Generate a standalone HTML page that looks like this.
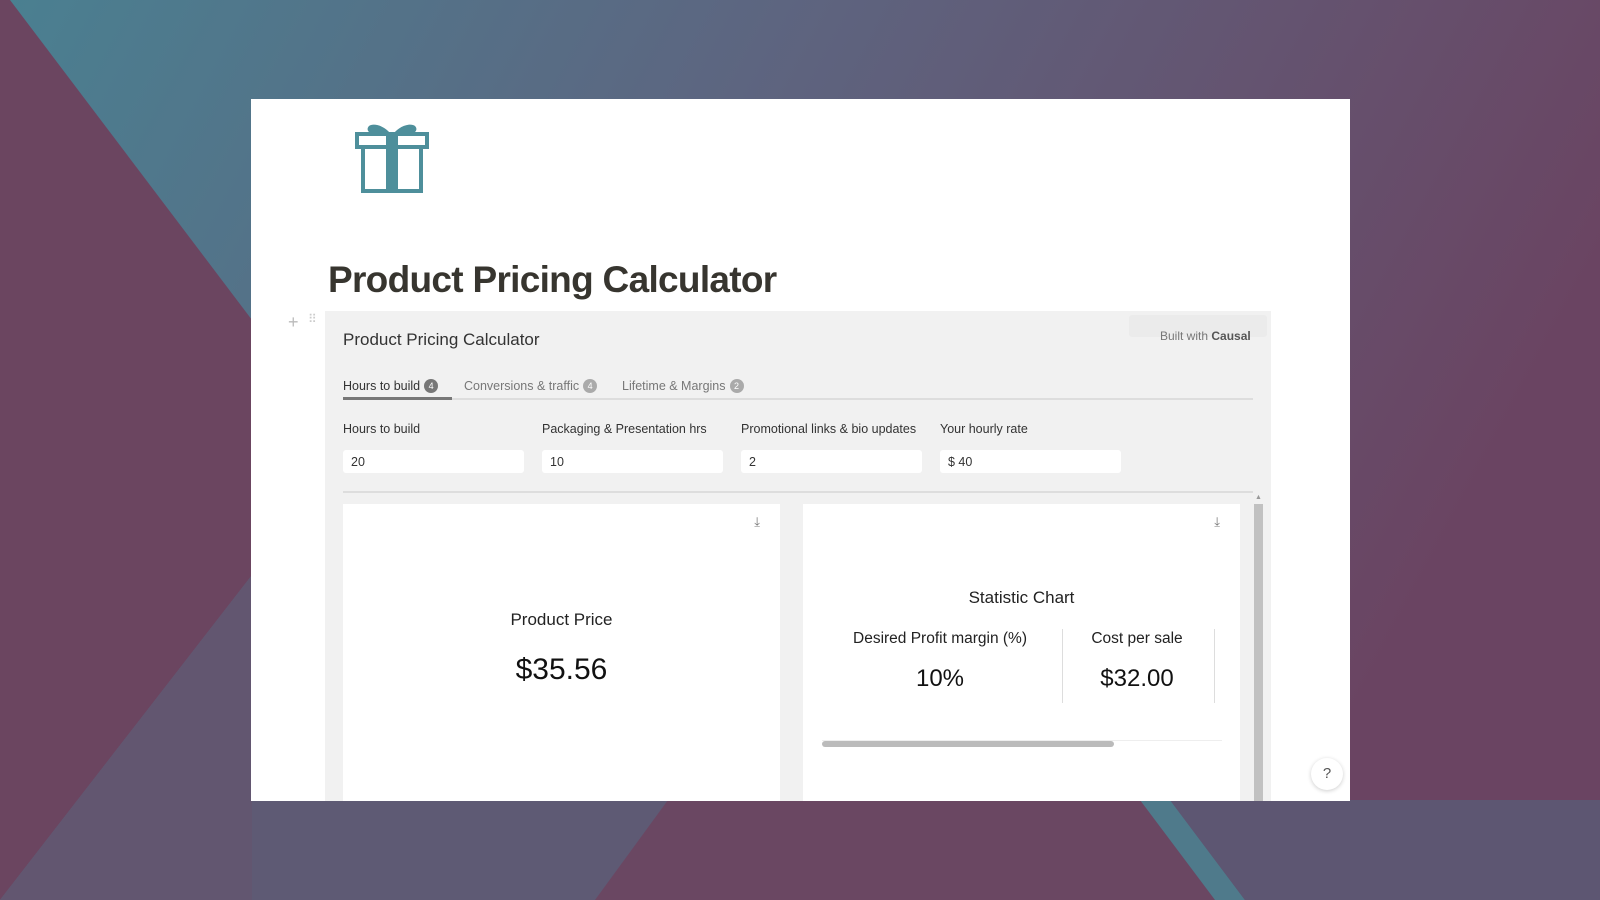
<!DOCTYPE html>
<html><head><meta charset="utf-8"><style>
*{margin:0;padding:0;box-sizing:border-box}
body{width:1600px;height:900px;position:relative;overflow:hidden;font-family:"Liberation Sans",sans-serif;color:#37352f}
.a{position:absolute;white-space:nowrap}
.lbl{font-size:12.5px;color:#333;top:421px}
.inp{top:451px;height:23px;width:181px;background:#fff;border-radius:3px;font-size:12.5px;color:#333;padding:5px 8px}
.tab{top:378px;font-size:12.5px;color:#777}
.bd{display:inline-block;width:14px;height:14px;border-radius:7px;background:#aaa;color:#fff;font-size:9px;text-align:center;line-height:14px;margin-left:4px;vertical-align:1px}
</style></head><body>
<svg class="a" style="left:0;top:0" width="1600" height="900">
<defs><linearGradient id="g" x1="0" y1="0" x2="1" y2="0.3"><stop offset="0" stop-color="#4a8091"/><stop offset="0.45" stop-color="#5d6580"/><stop offset="1" stop-color="#6a4462"/></linearGradient>
<linearGradient id="g3" x1="0" y1="0" x2="1" y2="0"><stop offset="0" stop-color="#5e5a74"/><stop offset="1" stop-color="#6a4762"/></linearGradient></defs>
<rect width="1600" height="900" fill="url(#g)"/>
<polygon points="0,0 10,0 252,320 252,575 0,900" fill="#6b4560"/>
<polygon points="0,900 252,575 252,900" fill="#625670"/>
<polygon points="252,800 668,800 595,900 252,900" fill="#5e5a74"/>
<polygon points="595,900 668,800 1140,800 1215,900" fill="#6a4762"/>
<polygon points="1140,800 1215,900 1245,900 1170,800" fill="#4f7a8b"/>
<polygon points="1170,800 1245,900 1600,900 1600,800" fill="#5d5672"/>
</svg>
<div class="a" style="left:251px;top:99px;width:1099px;height:702px;background:#fff;overflow:hidden">
<svg class="a" style="left:104px;top:22px" width="74" height="74" viewBox="0 0 74 74">
<path d="M35 12 C28 4 18 2 14 5 C11 8 13 12 18 13 Z M39 12 C46 4 56 2 60 5 C63 8 61 12 56 13 Z" fill="#4e8f9b"/>
<rect x="2" y="13" width="70" height="13" fill="none" stroke="#4e8f9b" stroke-width="4"/>
<rect x="8" y="26" width="58" height="44" fill="none" stroke="#4e8f9b" stroke-width="4"/>
<rect x="31" y="11" width="12" height="59" fill="#4e8f9b"/>
</svg>
<div class="a" style="left:77px;top:160px;font-size:37px;font-weight:bold;color:#37352f;letter-spacing:-0.7px">Product Pricing Calculator</div>
<div class="a" style="left:37px;top:213px;font-size:18px;color:#bbb">+</div>
<div class="a" style="left:57px;top:218px;font-size:12px;color:#ccc;letter-spacing:-2px;line-height:5px">⠿</div>
<div class="a" style="left:74px;top:212px;width:946px;height:500px;background:#f1f1f1">
<div class="a" style="left:18px;top:19px;font-size:17px;color:#333">Product Pricing Calculator</div>
<div class="a" style="left:804px;top:4px;width:138px;height:22px;background:#ebebeb;border-radius:3px"></div>
<div class="a" style="left:835px;top:18px;font-size:12px;color:#777">Built with <b style="color:#555">Causal</b></div>
<div class="a tab" style="left:18px;top:68px;color:#333">Hours to build<span class="bd" style="background:#777">4</span></div>
<div class="a tab" style="left:139px;top:68px">Conversions &amp; traffic<span class="bd">4</span></div>
<div class="a tab" style="left:297px;top:68px">Lifetime &amp; Margins<span class="bd">2</span></div>
<div class="a" style="left:18px;top:87px;width:910px;height:2px;background:#ddd"></div>
<div class="a" style="left:18px;top:86px;width:109px;height:3px;background:#777"></div>
<div class="a lbl" style="left:18px;top:111px">Hours to build</div>
<div class="a lbl" style="left:217px;top:111px">Packaging &amp; Presentation hrs</div>
<div class="a lbl" style="left:416px;top:111px">Promotional links &amp; bio updates</div>
<div class="a lbl" style="left:615px;top:111px">Your hourly rate</div>
<div class="a inp" style="left:18px;top:139px">20</div>
<div class="a inp" style="left:217px;top:139px">10</div>
<div class="a inp" style="left:416px;top:139px">2</div>
<div class="a inp" style="left:615px;top:139px">$ 40</div>
<div class="a" style="left:18px;top:180px;width:910px;height:2px;background:#ddd"></div>
<div class="a" style="left:18px;top:193px;width:437px;height:310px;background:#fff">
<div class="a" style="right:20px;top:10px;font-size:13px;color:#777">⤓</div>
<div class="a" style="left:0;width:437px;text-align:center;top:106px;font-size:17px;color:#222">Product Price</div>
<div class="a" style="left:0;width:437px;text-align:center;top:149px;font-size:30px;color:#111">$35.56</div>
</div>
<div class="a" style="left:478px;top:193px;width:437px;height:310px;background:#fff">
<div class="a" style="right:20px;top:10px;font-size:13px;color:#777">⤓</div>
<div class="a" style="left:0;width:437px;text-align:center;top:84px;font-size:17px;color:#222">Statistic Chart</div>
<div class="a" style="left:37px;width:200px;text-align:center;top:126px;font-size:15.5px;color:#222">Desired Profit margin (%)</div>
<div class="a" style="left:37px;width:200px;text-align:center;top:161px;font-size:24px;color:#111">10%</div>
<div class="a" style="left:259px;top:125px;width:1px;height:74px;background:#ddd"></div>
<div class="a" style="left:258px;width:152px;text-align:center;top:126px;font-size:15.5px;color:#222">Cost per sale</div>
<div class="a" style="left:258px;width:152px;text-align:center;top:161px;font-size:24px;color:#111">$32.00</div>
<div class="a" style="left:411px;top:125px;width:1px;height:74px;background:#ddd"></div>
<div class="a" style="left:19px;top:236px;width:400px;height:1px;background:#eee"></div>
<div class="a" style="left:19px;top:237px;width:292px;height:6px;border-radius:3px;background:#bbb"></div>
</div>
<div class="a" style="left:929px;top:193px;width:9px;height:310px;background:#c1c1c1"></div>
<div class="a" style="left:930px;top:183px;font-size:7px;color:#999">▲</div>
</div>
<div class="a" style="left:1060px;top:659px;width:32px;height:32px;border-radius:16px;background:#fff;box-shadow:0 1px 4px rgba(0,0,0,.2);text-align:center;line-height:32px;font-size:15px;color:#555">?</div>
</div>
</body></html>
